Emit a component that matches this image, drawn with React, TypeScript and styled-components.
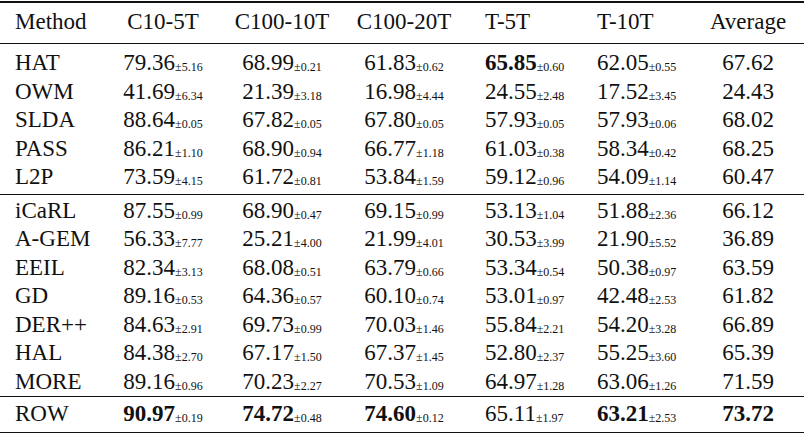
import React from 'react';
import styled, { createGlobalStyle } from 'styled-components';

const GlobalStyle = createGlobalStyle`
  html, body {
    margin: 0;
    padding: 0;
    background: #ffffff;
  }
`;

const Page = styled.div`
  width: 804px;
  height: 433px;
  padding-top: 1px;
  box-sizing: border-box;
  background: #ffffff;
`;

const Table = styled.table`
  width: 804px;
  table-layout: fixed;
  border-collapse: collapse;
  border-top: 2px solid #111;
  border-bottom: 2px solid #111;
  font-family: "Liberation Serif", "Times New Roman", serif;
  font-size: 23px;
  color: #111;
`;

const Col = styled.col<{ $w: number }>`
  width: ${p => p.$w}px;
`;

const Head = styled.thead`
  border-bottom: 1px solid #111;
`;

const HeadCell = styled.th<{ $align?: 'left' | 'center'; $pl?: number; $pr?: number }>`
  font-weight: normal;
  text-align: ${p => p.$align || 'center'};
  padding: 5px ${p => p.$pr || 0}px 7px ${p => p.$pl || 0}px;
  line-height: 28px;
  white-space: nowrap;
`;

const Group = styled.tbody<{ $top: number; $bottom: number; $rule?: boolean }>`
  border-top: ${p => (p.$rule ? '1px solid #111' : 'none')};

  & tr:first-child td {
    padding-top: ${p => p.$top}px;
  }
  & tr:last-child td {
    padding-bottom: ${p => p.$bottom}px;
  }
`;

const Cell = styled.td<{ $align?: 'left' | 'center'; $pl?: number; $pr?: number }>`
  text-align: ${p => p.$align || 'center'};
  padding: 0 ${p => p.$pr || 0}px 0 ${p => p.$pl || 0}px;
  line-height: 28.5px;
  white-space: nowrap;
`;

const Best = styled.b`
  font-weight: bold;
`;

const Std = styled.span`
  font-size: 12px;
  vertical-align: -1px;
  line-height: 0;
`;

interface Row {
  name: string;
  vals: [string, string][];
  avg: string;
  bold?: number[];
  boldAvg?: boolean;
}

const groups: { top: number; bottom: number; rows: Row[] }[] = [
  {
    top: 5,
    bottom: 2,
    rows: [
      { name: 'HAT', vals: [['79.36', '5.16'], ['68.99', '0.21'], ['61.83', '0.62'], ['65.85', '0.60'], ['62.05', '0.55']], avg: '67.62', bold: [3] },
      { name: 'OWM', vals: [['41.69', '6.34'], ['21.39', '3.18'], ['16.98', '4.44'], ['24.55', '2.48'], ['17.52', '3.45']], avg: '24.43' },
      { name: 'SLDA', vals: [['88.64', '0.05'], ['67.82', '0.05'], ['67.80', '0.05'], ['57.93', '0.05'], ['57.93', '0.06']], avg: '68.02' },
      { name: 'PASS', vals: [['86.21', '1.10'], ['68.90', '0.94'], ['66.77', '1.18'], ['61.03', '0.38'], ['58.34', '0.42']], avg: '68.25' },
      { name: 'L2P', vals: [['73.59', '4.15'], ['61.72', '0.81'], ['53.84', '1.59'], ['59.12', '0.96'], ['54.09', '1.14']], avg: '60.47' },
    ],
  },
  {
    top: 2,
    bottom: 0,
    rows: [
      { name: 'iCaRL', vals: [['87.55', '0.99'], ['68.90', '0.47'], ['69.15', '0.99'], ['53.13', '1.04'], ['51.88', '2.36']], avg: '66.12' },
      { name: 'A-GEM', vals: [['56.33', '7.77'], ['25.21', '4.00'], ['21.99', '4.01'], ['30.53', '3.99'], ['21.90', '5.52']], avg: '36.89' },
      { name: 'EEIL', vals: [['82.34', '3.13'], ['68.08', '0.51'], ['63.79', '0.66'], ['53.34', '0.54'], ['50.38', '0.97']], avg: '63.59' },
      { name: 'GD', vals: [['89.16', '0.53'], ['64.36', '0.57'], ['60.10', '0.74'], ['53.01', '0.97'], ['42.48', '2.53']], avg: '61.82' },
      { name: 'DER++', vals: [['84.63', '2.91'], ['69.73', '0.99'], ['70.03', '1.46'], ['55.84', '2.21'], ['54.20', '3.28']], avg: '66.89' },
      { name: 'HAL', vals: [['84.38', '2.70'], ['67.17', '1.50'], ['67.37', '1.45'], ['52.80', '2.37'], ['55.25', '3.60']], avg: '65.39' },
      { name: 'MORE', vals: [['89.16', '0.96'], ['70.23', '2.27'], ['70.53', '1.09'], ['64.97', '1.28'], ['63.06', '1.26']], avg: '71.59' },
    ],
  },
  {
    top: 3,
    bottom: 3,
    rows: [
      { name: 'ROW', vals: [['90.97', '0.19'], ['74.72', '0.48'], ['74.60', '0.12'], ['65.11', '1.97'], ['63.21', '2.53']], avg: '73.72', bold: [0, 1, 2, 4], boldAvg: true },
    ],
  },
];

const columns = [
  { title: 'C10-5T', align: 'center' as const, pl: 0 },
  { title: 'C100-10T', align: 'center' as const, pl: 0 },
  { title: 'C100-20T', align: 'center' as const, pl: 0 },
  { title: 'T-5T', align: 'left' as const, pl: 25 },
  { title: 'T-10T', align: 'left' as const, pl: 12 },
];

const widths = [110, 106, 132, 112, 125, 115, 104];

export default function App() {
  return (
    <>
      <GlobalStyle />
      <Page>
        <Table>
          <colgroup>
            {widths.map((w, i) => (
              <Col key={i} $w={w} />
            ))}
          </colgroup>
          <Head>
            <tr>
              <HeadCell $align="left" $pl={15}>Method</HeadCell>
              {columns.map(c => (
                <HeadCell key={c.title} $align={c.align} $pl={c.pl}>
                  {c.title}
                </HeadCell>
              ))}
              <HeadCell $pr={8}>Average</HeadCell>
            </tr>
          </Head>
          {groups.map((g, gi) => (
            <Group key={gi} $top={g.top} $bottom={g.bottom} $rule={gi > 0}>
              {g.rows.map(r => (
                <tr key={r.name}>
                  <Cell $align="left" $pl={15}>{r.name}</Cell>
                  {r.vals.map(([m, s], i) => (
                    <Cell key={i} $align={columns[i].align} $pl={columns[i].pl}>
                      {r.bold?.includes(i) ? <Best>{m}</Best> : m}
                      <Std>±{s}</Std>
                    </Cell>
                  ))}
                  <Cell $pr={8}>{r.boldAvg ? <Best>{r.avg}</Best> : r.avg}</Cell>
                </tr>
              ))}
            </Group>
          ))}
        </Table>
      </Page>
    </>
  );
}
